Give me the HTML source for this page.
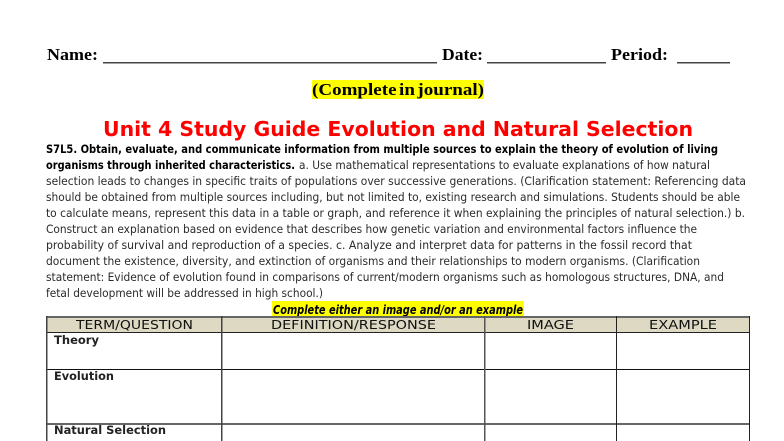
<!DOCTYPE html>
<html lang="en">
<head>
<meta charset="utf-8">
<title>Unit 4 Study Guide</title>
<style>
html,body{margin:0;padding:0;background:#fff;width:784px;height:441px;overflow:hidden}
svg{display:block}
.h{font-family:"Liberation Serif",serif;font-weight:bold;font-size:17px;fill:#000}
.b{font-family:"DejaVu Sans",sans-serif;font-size:11.5px;fill:#2a2a2a}
.bb{font-family:"DejaVu Sans",sans-serif;font-weight:bold;font-size:11.5px;fill:#000}
.t{font-family:"DejaVu Sans",sans-serif;font-size:12.5px;fill:#111}
.tb{font-family:"DejaVu Sans",sans-serif;font-size:11.5px;font-weight:bold;fill:#222}
</style>
</head>
<body>
<svg width="784" height="441" viewBox="0 0 784 441" xmlns="http://www.w3.org/2000/svg">
<rect width="784" height="441" fill="#fff"/>

<text class="h" x="47" y="60" textLength="51" lengthAdjust="spacingAndGlyphs">Name:</text>
<rect x="103" y="62" width="334" height="1.500" fill="#444"/>
<text class="h" x="442" y="60" textLength="41" lengthAdjust="spacingAndGlyphs">Date:</text>
<rect x="487" y="62" width="119" height="1.500" fill="#444"/>
<text class="h" x="611" y="60" textLength="57" lengthAdjust="spacingAndGlyphs">Period:</text>
<rect x="677" y="62" width="53" height="1.500" fill="#444"/>

<rect x="312" y="80" width="172" height="19" fill="#ffff00"/>
<text class="h" x="312" y="95" textLength="172" lengthAdjust="spacingAndGlyphs" style="word-spacing:-2px">(Complete in journal)</text>

<text x="103" y="136" textLength="590" lengthAdjust="spacingAndGlyphs" style="font-family:'DejaVu Sans',sans-serif;font-weight:bold;font-size:20px;fill:#ff0000">Unit 4 Study Guide Evolution and Natural Selection</text>

<text class="bb" x="46" y="153" textLength="672" lengthAdjust="spacingAndGlyphs">S7L5. Obtain, evaluate, and communicate information from multiple sources to explain the theory of evolution of living</text>
<text class="bb" x="46" y="169" textLength="249" lengthAdjust="spacingAndGlyphs">organisms through inherited characteristics.</text>
<text class="b" x="299" y="169" textLength="411" lengthAdjust="spacingAndGlyphs">a. Use mathematical representations to evaluate explanations of how natural</text>
<text class="b" x="46" y="185" textLength="700" lengthAdjust="spacingAndGlyphs">selection leads to changes in specific traits of populations over successive generations. (Clarification statement: Referencing data</text>
<text class="b" x="46" y="201" textLength="694" lengthAdjust="spacingAndGlyphs">should be obtained from multiple sources including, but not limited to, existing research and simulations. Students should be able</text>
<text class="b" x="46" y="217" textLength="699" lengthAdjust="spacingAndGlyphs">to calculate means, represent this data in a table or graph, and reference it when explaining the principles of natural selection.) b.</text>
<text class="b" x="46" y="233" textLength="651" lengthAdjust="spacingAndGlyphs">Construct an explanation based on evidence that describes how genetic variation and environmental factors influence the</text>
<text class="b" x="46" y="249" textLength="646" lengthAdjust="spacingAndGlyphs">probability of survival and reproduction of a species. c. Analyze and interpret data for patterns in the fossil record that</text>
<text class="b" x="46" y="265" textLength="654" lengthAdjust="spacingAndGlyphs">document the existence, diversity, and extinction of organisms and their relationships to modern organisms. (Clarification</text>
<text class="b" x="46" y="281" textLength="678" lengthAdjust="spacingAndGlyphs">statement: Evidence of evolution found in comparisons of current/modern organisms such as homologous structures, DNA, and</text>
<text class="b" x="46" y="297" textLength="277" lengthAdjust="spacingAndGlyphs">fetal development will be addressed in high school.)</text>

<rect x="272" y="301" width="252" height="16" fill="#ffff00"/>
<text class="bb" x="273" y="314" textLength="250" lengthAdjust="spacingAndGlyphs" style="font-style:italic;font-size:12px">Complete either an image and/or an example</text>

<rect x="47" y="318" width="702" height="14" fill="#ddd9c3"/>
<rect x="46" y="316" width="704" height="2" fill="#666"/>
<rect x="47" y="332" width="703" height="1" fill="#222"/>
<rect x="47" y="369" width="703" height="1" fill="#111"/>
<rect x="47" y="423" width="703" height="2" fill="#666"/>
<rect x="46" y="316" width="1.500" height="125" fill="#444"/>
<rect x="221" y="316" width="1.500" height="125" fill="#444"/>
<rect x="484" y="316" width="1.500" height="125" fill="#555"/>
<rect x="616" y="316" width="1" height="125" fill="#222"/>
<rect x="749" y="316" width="1" height="125" fill="#222"/>

<text class="t" x="76" y="329" textLength="117" lengthAdjust="spacingAndGlyphs">TERM/QUESTION</text>
<text class="t" x="271" y="329" textLength="165" lengthAdjust="spacingAndGlyphs">DEFINITION/RESPONSE</text>
<text class="t" x="527" y="329" textLength="47" lengthAdjust="spacingAndGlyphs">IMAGE</text>
<text class="t" x="649" y="329" textLength="68" lengthAdjust="spacingAndGlyphs">EXAMPLE</text>

<text class="tb" x="54" y="344" textLength="45" lengthAdjust="spacingAndGlyphs">Theory</text>
<text class="tb" x="54" y="380" textLength="60" lengthAdjust="spacingAndGlyphs">Evolution</text>
<text class="tb" x="54" y="434" textLength="112" lengthAdjust="spacingAndGlyphs">Natural Selection</text>
</svg>
</body>
</html>
